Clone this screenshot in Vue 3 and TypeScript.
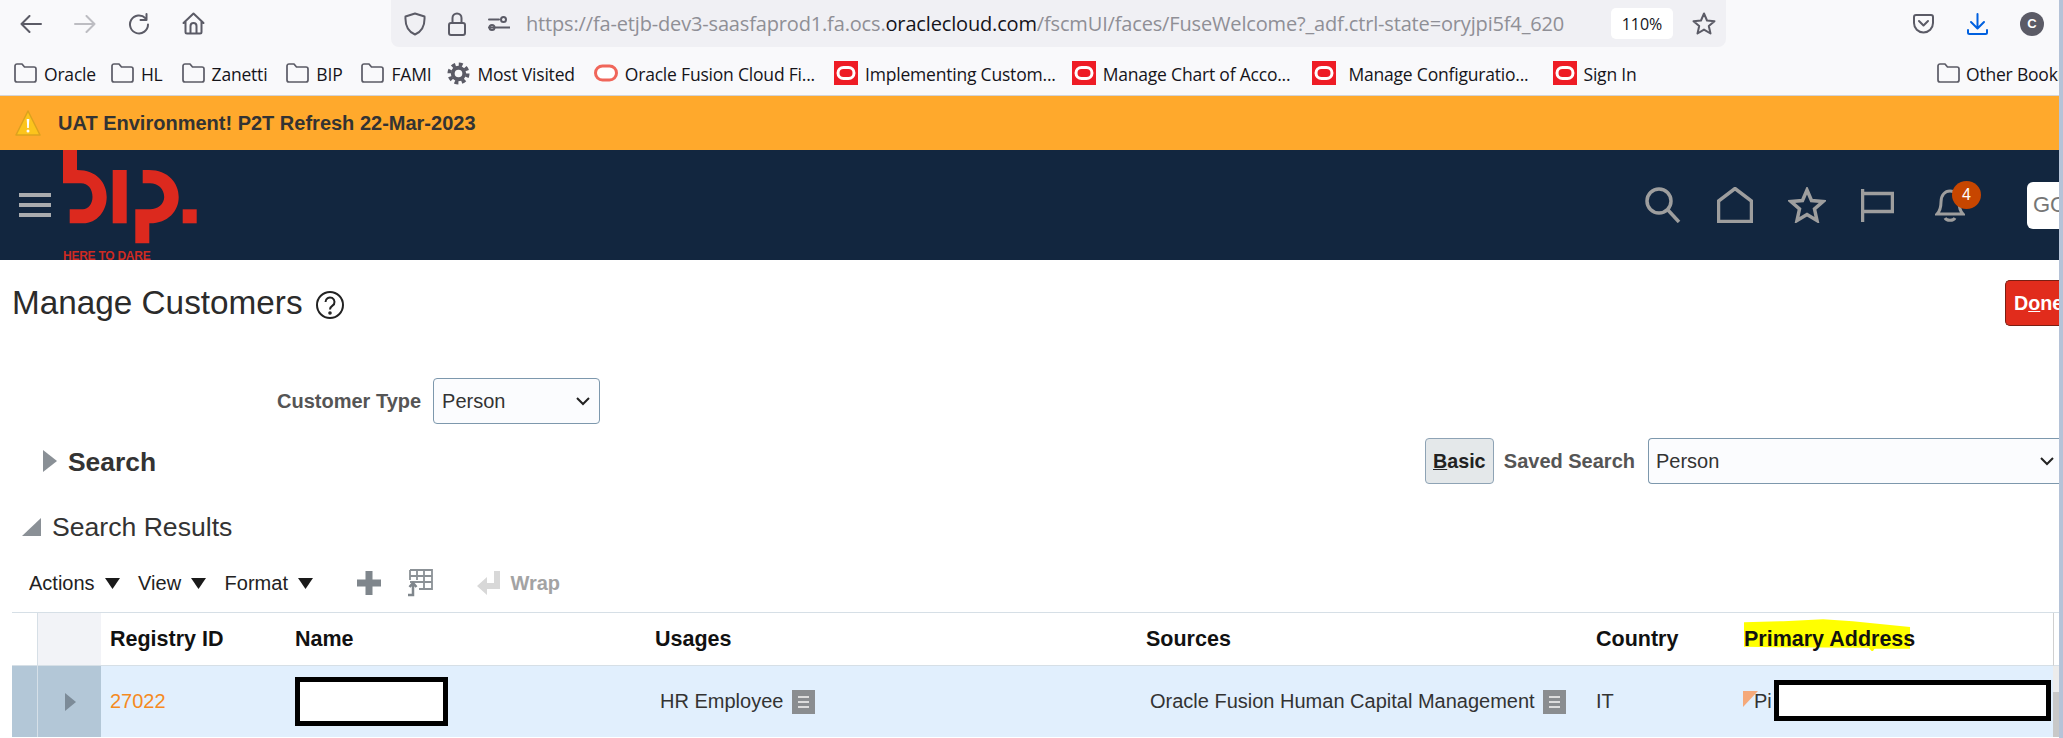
<script setup lang="ts">
type Mark = 'folder' | 'gear' | 'ring' | 'red'
const bookmarks: { label: string; mark: Mark }[] = [
  { label: 'Oracle', mark: 'folder' },
  { label: 'HL', mark: 'folder' },
  { label: 'Zanetti', mark: 'folder' },
  { label: 'BIP', mark: 'folder' },
  { label: 'FAMI', mark: 'folder' },
  { label: 'Most Visited', mark: 'gear' },
  { label: 'Oracle Fusion Cloud Fi...', mark: 'ring' },
  { label: 'Implementing Custom...', mark: 'red' },
  { label: 'Manage Chart of Acco...', mark: 'red' },
  { label: 'Manage Configuratio...', mark: 'red' },
  { label: 'Sign In', mark: 'red' }
]
const menus = ['Actions', 'View', 'Format']
const columns = ['Registry ID', 'Name', 'Usages', 'Sources', 'Country']
</script>

<template>
  <div class="screen">
    <div class="window">
      <header class="toolbar">
        <div class="nav">
          <svg width="22" height="18" viewBox="0 0 22 18" class="ic"><path d="M1.500 9H21M9.500 1 1.500 9l8 8" /></svg>
          <svg width="22" height="18" viewBox="0 0 22 18" class="ic off"><path d="M1 9h19.500M12.500 1l8 8-8 8" /></svg>
          <svg width="22" height="22" viewBox="0 0 22 22" class="ic"><path d="M17.500 5.200A9 9 0 1 0 20 11.500" /><path d="M18.500 1v6h-6" /></svg>
          <svg width="23" height="23" viewBox="0 0 23 23" class="ic"><path d="M1.500 11 11.500 1.500 21.500 11M3.500 9.500V20a1.500 1.500 0 0 0 1.500 1.500h13a1.500 1.500 0 0 0 1.500-1.500V9.500M8.500 21.500V14a3 3 0 0 1 6 0v7.500" /></svg>
        </div>
        <div class="urlbar">
          <svg width="22" height="24" viewBox="0 0 22 24" class="ic"><path d="M11 1.500 20.500 4.500C21 13 18 19.500 11 22.500 4 19.500 1 13 1.500 4.500Z" /></svg>
          <svg width="18" height="24" viewBox="0 0 18 24" class="ic lock"><rect x="1" y="11" width="16" height="12" rx="2" /><path d="M4.500 11V6a4.500 4.500 0 0 1 9 0v5" /></svg>
          <svg width="22" height="15" viewBox="0 0 22 15" class="ic perm"><circle cx="15.500" cy="3.500" r="2.500" /><path d="M1 3.500h10M1 11.500h21" /><circle cx="4" cy="11.500" r="2.500" /></svg>
          <div class="url">https://fa-etjb-dev3-saasfaprod1.fa.ocs.<b>oraclecloud.com</b>/fscmUI/faces/FuseWelcome?_adf.ctrl-state=oryjpi5f4_620</div>
          <div class="pill">110%</div>
          <svg width="24" height="23" viewBox="0 0 24 23" class="ic"><path d="M12 1.500 15 8.500 22.500 9.200 16.800 14 18.500 21.500 12 17.600 5.500 21.500 7.200 14 1.500 9.200 9 8.500Z" /></svg>
        </div>
        <div class="tools">
          <svg width="21" height="20" viewBox="0 0 21 20" class="ic"><path d="M1 3a2 2 0 0 1 2-2h15a2 2 0 0 1 2 2v6a9.500 9.500 0 0 1-19 0Z" /><path d="M6 7l4.500 4.500L15 7" /></svg>
          <svg width="21" height="22" viewBox="0 0 21 22" class="ic blue"><path d="M10.500 1v14M4 9l6.500 6.500L17 9M1 17v2.500a1.500 1.500 0 0 0 1.500 1.500h16a1.500 1.500 0 0 0 1.500-1.500V17" /></svg>
          <div class="avatar">C</div>
        </div>
      </header>

      <nav class="bookmarks">
        <div v-for="b in bookmarks" :key="b.label" class="bm">
          <svg v-if="b.mark === 'folder'" width="23" height="20" viewBox="0 0 23 20" class="ic thin"><path d="M1 3a2 2 0 0 1 2-2h5l2.500 3H20a2 2 0 0 1 2 2v11a2 2 0 0 1-2 2H3a2 2 0 0 1-2-2Z" /></svg>
          <svg v-else-if="b.mark === 'gear'" width="23" height="23" viewBox="0 0 24 24" class="gear"><circle cx="12" cy="12" r="9.500" class="teeth" /><circle cx="12" cy="12" r="6" class="hub" /></svg>
          <svg v-else-if="b.mark === 'ring'" width="24" height="18" viewBox="0 0 24 18" class="ring"><rect x="1.500" y="2" width="21" height="14" rx="7" /></svg>
          <svg v-else width="24" height="24" viewBox="0 0 24 24" class="redmark"><rect width="24" height="24" /><rect x="4" y="6.500" width="16" height="11" rx="5.500" class="o" /></svg>
          <span>{{ b.label }}</span>
        </div>
        <div class="bm other">
          <svg width="23" height="20" viewBox="0 0 23 20" class="ic thin"><path d="M1 3a2 2 0 0 1 2-2h5l2.500 3H20a2 2 0 0 1 2 2v11a2 2 0 0 1-2 2H3a2 2 0 0 1-2-2Z" /></svg>
          <span>Other Bookmarks</span>
        </div>
      </nav>

      <div class="banner">
        <svg width="26" height="26" viewBox="0 0 26 26" class="warn">
          <path d="M13 1 25 25H1Z" class="tri" />
          <path d="M11.700 9h2.600l-.5 9h-1.600Z" class="bang" />
          <circle cx="13" cy="21" r="1.500" class="bang" />
        </svg>
        <span>UAT Environment! P2T Refresh 22-Mar-2023</span>
      </div>

      <div class="brand">
        <div class="burger"><i></i><i></i><i></i></div>
        <svg class="logo" width="140" height="110" viewBox="0 0 140 110">
          <path d="M2 0H16V20C36 20 45.700 33 45.700 47 45.700 61 36 73.300 22 73.300H8.700V59.300H22C27 59.300 31.500 54 31.500 47 31.500 39 27 33.300 20 33.300H2Z" />
          <rect x="51.700" y="20" width="14" height="53.300" />
          <path d="M81.700 20H88C107 20 117.700 33 117.700 47 117.700 61 107 73.300 89 73.300H88.300V93.300H74.300V59.300H89C97 59.300 103.200 54 103.200 47 103.200 39 97 33.300 89 33.300H81.700Z" />
          <rect x="121.700" y="59.300" width="14" height="14" />
          <text x="2" y="110" class="dare">HERE TO DARE</text>
        </svg>
        <div class="actions">
          <svg width="36" height="36" viewBox="0 0 36 36" class="gi"><circle cx="14" cy="14" r="12" /><path d="M22.500 22.500 34 35" /></svg>
          <svg width="36" height="36" viewBox="0 0 36 36" class="gi"><path d="M1.500 34.500V14L18 1.500 34.500 14V34.500Z" /></svg>
          <svg width="38" height="36" viewBox="0 0 38 36" class="gi"><path d="M19 3 23.500 13.500 35 14.500 26.500 22 29 33.500 19 27.500 9 33.500 11.500 22 3 14.500 14.500 13.500Z" /></svg>
          <svg width="33" height="33" viewBox="0 0 33 33" class="gi"><path d="M1.500 0V33M1.500 4.500H31.500V22.500H1.500" /></svg>
          <div class="bell">
            <svg width="30" height="33" viewBox="0 0 30 33" class="gi thinner"><path d="M2 25C5 22 6 19 6 13 6 6 10 2 15 2S24 6 24 13C24 19 25 22 28 25ZM10 29C11.500 32 18.500 32 20 29" /></svg>
            <div class="badge">4</div>
          </div>
          <div class="userbox">GC</div>
        </div>
      </div>

      <main class="page">
        <div class="titlerow">
          <h1>Manage Customers</h1>
          <svg width="28" height="28" viewBox="0 0 28 28" class="help">
            <circle cx="14" cy="14" r="13" />
            <path d="M9.500 11a4.500 4.500 0 1 1 7 3.700c-1.500 1-2.500 1.800-2.500 3.800" />
            <circle cx="14" cy="22" r=".8" />
          </svg>
          <button class="done">D<u>o</u>ne</button>
        </div>

        <div class="typerow">
          <label>Customer Type</label>
          <div class="select small">
            <span>Person</span>
            <svg width="14" height="9" viewBox="0 0 14 9" class="chev"><path d="M1 1l6 6 6-6" /></svg>
          </div>
        </div>

        <div class="searchrow">
          <svg width="14" height="22" viewBox="0 0 14 22" class="disc"><path d="M0 0 14 11 0 22Z" /></svg>
          <h2>Search</h2>
          <button class="basic"><u>B</u>asic</button>
          <label>Saved Search</label>
          <div class="select wide">
            <span>Person</span>
            <svg width="14" height="9" viewBox="0 0 14 9" class="chev"><path d="M1 1l6 6 6-6" /></svg>
          </div>
        </div>

        <div class="resultsrow">
          <svg width="19" height="18" viewBox="0 0 19 18" class="disc"><path d="M19 0V18H0Z" /></svg>
          <h3>Search Results</h3>
        </div>

        <div class="tablebar">
          <div v-for="m in menus" :key="m" class="menu">
            <span>{{ m }}</span>
            <svg width="15" height="11" viewBox="0 0 15 11" class="drop"><path d="M0 0H15L7.500 11Z" /></svg>
          </div>
          <svg width="24" height="24" viewBox="0 0 24 24" class="plus"><path d="M8.500 0h7v8.500H24v7h-8.500V24h-7v-8.500H0v-7h8.500Z" /></svg>
          <svg width="26" height="28" viewBox="0 0 26 28" class="freeze">
            <path d="M3 1h22v19H12M3 1v10M3 7h22M3 13h22M10 1v10M17 1v19" class="grid" />
            <path d="M1 26h5V15M2.500 18 6 14l3.500 4" class="arrow" />
          </svg>
          <svg width="23" height="25" viewBox="0 0 23 25" class="wrapic"><path d="M23 0v18H10v6L0 15 10 6v6h7V0Z" /></svg>
          <span class="wraptxt">Wrap</span>
        </div>

        <div class="table">
          <div class="cell hd gutter"></div>
          <div class="cell hd shade"></div>
          <div v-for="c in columns" :key="c" class="cell hd">{{ c }}</div>
          <div class="cell hd addr">
            <svg class="marker" width="168" height="32" viewBox="0 0 170 32"><path d="M0 3 40 2 80 0 110 2 130 4 168 8V30H132L130 33 126 29 0 28Z" /></svg>
            <span>Primary Address</span>
          </div>
          <div class="cell hd endcap"></div>

          <div class="cell rw gutter tone"></div>
          <div class="cell rw tone">
            <svg width="11" height="18" viewBox="0 0 11 18" class="expand"><path d="M0 0 11 9 0 18Z" /></svg>
          </div>
          <div class="cell rw"><a class="link">27022</a></div>
          <div class="cell rw"><div class="redact namebox"></div></div>
          <div class="cell rw inset">
            <span>HR Employee</span>
            <svg width="23" height="24" viewBox="0 0 23 24" class="note"><rect width="23" height="24" /><path d="M6 7h11M6 12h11M6 17h11" /></svg>
          </div>
          <div class="cell rw inset tight">
            <span>Oracle Fusion Human Capital Management</span>
            <svg width="23" height="24" viewBox="0 0 23 24" class="note"><rect width="23" height="24" /><path d="M6 7h11M6 12h11M6 17h11" /></svg>
          </div>
          <div class="cell rw">IT</div>
          <div class="cell rw addrcell">
            <svg width="15" height="16" viewBox="0 0 15 16" class="flagcorner"><path d="M0 0H15L0 16Z" /></svg>
            <span>Pi</span>
            <div class="redact addrbox"></div>
          </div>
          <div class="cell rw track"><i></i></div>
        </div>
      </main>
    </div>
    <div class="edge"></div>
  </div>
</template>

<style scoped>
.screen { display: flex; width: 2063px; height: 738px; overflow: hidden; background: #fff; font-family: "Liberation Sans", Arial, sans-serif; color: #333; }
.window { width: 2059px; flex: none; overflow: hidden; }
.edge { width: 4px; flex: none; background: #b5c3d8; }
.ic { fill: none; stroke: #5b5b66; stroke-width: 2; stroke-linecap: round; stroke-linejoin: round; flex: none; }
.ic.off { stroke: #bdbdc2; }
.ic.blue { stroke: #0060df; }
.ic.thin { stroke-width: 1.700; }

.toolbar { height: 47px; display: flex; align-items: center; background: #f9f9fb; padding-left: 20px; }
.nav { display: flex; align-items: center; gap: 32px; width: 371px; flex: none; }
.urlbar { width: 1335px; height: 47px; flex: none; display: flex; align-items: center; background: #f0f0f4; border-radius: 0 0 8px 8px; padding: 0 11px 0 13px; box-sizing: border-box; }
.lock { margin-left: 22px; }
.perm { margin-left: 22px; }
.url { margin-left: 16px; width: 1085px; font: 20px "Open Sans", sans-serif; color: #8f8f96; white-space: nowrap; letter-spacing: -.16px; flex: none; overflow: hidden; }
.url b { font-weight: 400; color: #15141a; }
.pill { width: 62px; height: 31px; background: #fff; border-radius: 5px; display: flex; align-items: center; justify-content: center; font: 16px "Open Sans", sans-serif; color: #15141a; flex: none; }
.urlbar > svg:last-child { margin-left: 19px; }
.tools { display: flex; align-items: center; margin-left: 187px; }
.tools svg:nth-child(2) { margin-left: 33px; }
.avatar { width: 24px; height: 24px; margin-left: 32px; border-radius: 50%; background: #5b5b66; color: #fff; font-size: 13px; font-weight: 700; display: flex; align-items: center; justify-content: center; }

.bookmarks { height: 49px; box-sizing: border-box; padding: 4px 0 0 14px; display: flex; align-items: center; background: #f9f9fb; gap: 19px; border-bottom: 1px solid #d4d4d6; }
.bm { display: flex; align-items: center; gap: 7px; font: 17.500px "Open Sans", sans-serif; letter-spacing: -.2px; color: #15141a; white-space: nowrap; flex: none; }
.bm span { margin-top: 2px; }
.bm:nth-child(1) { margin-right: -4px; }
.bm:nth-child(5) { margin-right: -3px; }
.bm:nth-child(8) { margin-right: -3px; }
.bm:nth-child(9) { margin-right: 3px; }
.bm:nth-child(10) { gap: 12px; margin-right: 5px; }
.bm.other { margin-left: auto; width: 122px; gap: 6px; overflow: hidden; }
.gear .teeth { fill: none; stroke: #5b5b66; stroke-width: 4; stroke-dasharray: 4 3.460; }
.gear .hub { fill: none; stroke: #5b5b66; stroke-width: 4; }
.ring rect { fill: #fff; stroke: #f0665a; stroke-width: 3; }
.redmark rect { fill: #ee1c25; }
.redmark .o { fill: none; stroke: #fff; stroke-width: 3; }

.banner { height: 54px; background: #ffa92c; display: flex; align-items: center; padding-left: 15px; font-size: 20px; font-weight: 700; color: #333; gap: 17px; }
.warn .tri { fill: #fcc41c; stroke: #dca21e; stroke-width: 1.500; stroke-linejoin: round; }
.warn .bang { fill: #fff; }

.brand { height: 110px; background: #12263f; display: flex; align-items: center; padding-left: 19px; overflow: hidden; }
.burger { width: 32px; display: flex; flex-direction: column; gap: 6px; flex: none; }
.burger i { display: block; height: 4px; background: #a9abae; }
.logo { margin-left: 10px; align-self: flex-start; flex: none; }
.logo path, .logo rect { fill: #dc291e; }
.logo .dare { fill: #cf2a22; font-size: 12px; font-weight: 700; letter-spacing: -.25px; font-family: "Liberation Sans", sans-serif; }
.actions { margin-left: auto; display: flex; align-items: center; }
.actions > svg:nth-child(2) { margin-left: 36px; }
.actions > svg:nth-child(3) { margin-left: 35px; }
.actions > svg:nth-child(4) { margin-left: 35px; }
.gi { fill: none; stroke: #9e9e9e; stroke-width: 3.500; flex: none; }
.gi.thinner { stroke-width: 3; }
.bell { position: relative; width: 30px; height: 33px; margin-left: 41px; }
.badge { position: absolute; left: 17px; top: -8px; width: 29px; height: 28px; border-radius: 50%; background: #c74600; color: #fff; font-size: 16px; display: flex; align-items: center; justify-content: center; }
.userbox { width: 40px; height: 47px; margin: 0 -8px 0 62px; background: #fff; border-radius: 6px 0 0 6px; color: #767676; font: 22px "Liberation Sans", sans-serif; display: flex; align-items: center; padding-left: 6px; box-sizing: border-box; overflow: hidden; flex: none; }

.page { display: flex; flex-direction: column; }
.titlerow { display: flex; align-items: center; height: 46px; margin-top: 20px; padding-left: 12px; }
h1 { margin: 0; font-size: 33.300px; font-weight: 400; color: #2b2b2b; line-height: 46px; }
.help { margin-left: 13px; fill: none; stroke: #222; stroke-width: 2; margin-top: 3px; }
.done { margin-left: auto; width: 54px; height: 46px; background: #e12c1c; border: 1px solid #7a1e12; border-right: 0; border-radius: 5px 0 0 5px; color: #fff; font: 700 19.700px "Liberation Sans", sans-serif; padding: 0 0 0 8px; text-align: left; white-space: nowrap; overflow: hidden; }

.typerow { display: flex; align-items: center; height: 46px; margin-top: 52px; padding-left: 277px; }
label { font-size: 20px; font-weight: 700; color: #555; }
.select { height: 46px; box-sizing: border-box; border: 1px solid #7d98ad; border-radius: 4px; background: #fbfcfe; display: flex; align-items: center; justify-content: space-between; font-size: 20px; color: #333; flex: none; }
.select.small { width: 167px; margin-left: 12px; padding: 0 9px 0 8px; }
.select.wide { width: 411px; margin-left: 13px; padding: 0 5px 0 7px; border-right: 0; border-radius: 4px 0 0 4px; }
.chev { fill: none; stroke: #222; stroke-width: 2; }

.searchrow { display: flex; align-items: center; height: 46px; margin-top: 14px; padding-left: 43px; }
h2 { margin: 0 0 0 11px; font-size: 26.400px; font-weight: 700; color: #333; position: relative; top: 1px; }
.disc path { fill: #8a9096; }
.basic { margin-left: auto; width: 69px; height: 46px; background: #e4e8ea; border: 1px solid #8ea3b5; border-radius: 4px; font: 700 19.700px "Liberation Sans", sans-serif; color: #222; padding: 0; }
.searchrow label { margin-left: 10px; }

.resultsrow { display: flex; align-items: center; height: 34px; margin-top: 26px; padding-left: 22px; }
h3 { margin: 0 0 0 11px; font-size: 26.600px; font-weight: 400; color: #333; }

.tablebar { display: flex; align-items: center; height: 34px; margin-top: 22px; padding-left: 29px; }
.menu { display: flex; align-items: center; gap: 10px; margin-right: 18.500px; font-size: 20px; color: #222; }
.drop path { fill: #1a1a1a; }
.plus { margin-left: 26px; }
.plus path { fill: #7f868c; }
.freeze { margin-left: 26px; fill: none; }
.freeze .grid { stroke: #8b9196; stroke-width: 1.800; }
.freeze .arrow { stroke: #7f868c; stroke-width: 2.500; }
.wrapic { margin-left: 44px; }
.wrapic path { fill: #d8d8d8; }
.wraptxt { margin-left: 10px; font-size: 20px; font-weight: 700; color: #a3a3a3; }

.table { display: grid; grid-template-columns: 26px 63px 185px 360px 491px 450px 148px 318px 6px; grid-template-rows: 53px 71px; margin-top: 12px; margin-left: 12px; border-top: 1px solid #d6dfe6; }
.cell { display: flex; align-items: center; box-sizing: border-box; padding-left: 9px; white-space: nowrap; min-width: 0; }
.hd { font-size: 21.500px; font-weight: 700; color: #111; background: #fff; border-bottom: 1px solid #d6dfe6; }
.hd.gutter { border-right: 1px solid #d6dfe6; }
.hd.shade { background: #f2f3f7; }
.hd.addr { position: relative; }
.hd.addr span { position: relative; }
.marker { position: absolute; left: 9px; top: 6px; }
.marker path { fill: #ffff00; }
.hd.endcap { border-left: 1px solid #d0d0d0; padding: 0; }
.rw { background: #e1effd; font-size: 20px; color: #333; height: 71px; }
.rw.tone { background: #b3c7d7; }
.rw.gutter { border-right: 1px solid #d6e0e8; }
.expand { margin-left: 18px; }
.expand path { fill: #7c8b98; }
.link { color: #f58a1f; }
.rw.inset { padding-left: 14px; gap: 9px; }
.rw.inset.tight { padding-left: 13px; gap: 8px; }
.note rect { fill: #8a8d90; }
.note path { stroke: #dcdcdc; stroke-width: 2; }
.redact { border: 5px solid #000; background: #fff; box-sizing: border-box; }
.namebox { width: 153px; height: 49px; margin-top: -1px; }
.addrcell { position: relative; }
.flagcorner { position: absolute; left: 8px; top: 25px; }
.flagcorner path { fill: #f5a97a; }
.addrcell span { margin-left: 10px; }
.addrbox { position: absolute; left: 39px; top: 14px; width: 277px; height: 41px; }
.track { padding: 0; background: #ececec; display: block; position: relative; }
.track i { position: absolute; left: 0; right: 0; top: 26px; bottom: 0; background: #c8c8c8; }
</style>
